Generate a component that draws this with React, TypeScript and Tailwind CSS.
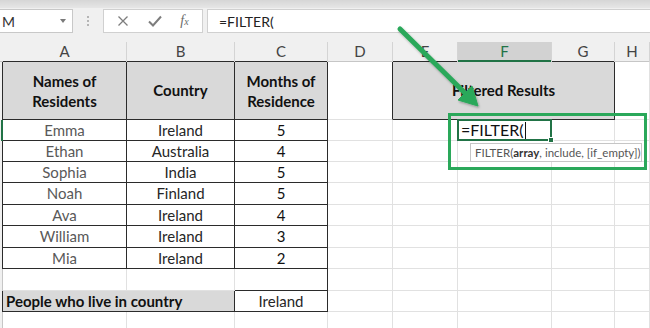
import React from "react";

const dark = "border-[#2b2b2b]";

type Row = { name: string; country: string; months: string };

const rows: Row[] = [
  { name: "Emma", country: "Ireland", months: "5" },
  { name: "Ethan", country: "Australia", months: "4" },
  { name: "Sophia", country: "India", months: "5" },
  { name: "Noah", country: "Finland", months: "5" },
  { name: "Ava", country: "Ireland", months: "4" },
  { name: "William", country: "Ireland", months: "3" },
  { name: "Mia", country: "Ireland", months: "2" },
];

const letters = ["A", "B", "C", "D", "E", "F", "G", "H"];

function Blank({ cls = "" }: { cls?: string }) {
  return <div className={`border-r border-b border-[#e1e1e1] ${cls}`} />;
}

export default function App() {
  return (
    <div className="relative w-[650px] h-[328px] overflow-hidden bg-white font-['Lato',sans-serif] text-[15px]">
      {/* formula bar */}
      <div className="h-[42px] bg-[#f0f0f0] flex flex-col">
        <div className="h-[8px] bg-gradient-to-b from-[#d6d6d6] to-[#e6e6e6]" />
        <div className="flex items-start pt-[1px] h-[34px]">
          <div className="w-[73px] h-[24px] bg-white border border-l-0 border-[#c8c8c8] flex items-center justify-between pl-[2px] pr-[6px]">
            <span className="text-[14px] text-[#333]">M</span>
            <span className="w-0 h-0 border-l-[3.5px] border-r-[3.5px] border-t-[4px] border-l-transparent border-r-transparent border-t-[#7a7a7a]" />
          </div>
          <div className="w-[30px] h-[24px] flex flex-col items-center justify-center gap-[2px]">
            <span className="w-[2px] h-[2px] bg-[#b5b5b5]" />
            <span className="w-[2px] h-[2px] bg-[#b5b5b5]" />
            <span className="w-[2px] h-[2px] bg-[#b5b5b5]" />
          </div>
          <div className="w-[100px] h-[24px] bg-white border border-[#d0d0d0] flex items-center justify-around px-[4px]">
            <svg width="12" height="12" viewBox="0 0 12 12">
              <path d="M1.5 1.5 L10.5 10.5 M10.5 1.5 L1.5 10.5" stroke="#7d7d7d" strokeWidth="1.3" />
            </svg>
            <svg width="14" height="12" viewBox="0 0 14 12">
              <path d="M1 6.5 L5 10.5 L13 1.5" stroke="#7d7d7d" strokeWidth="2" fill="none" />
            </svg>
            <span className="font-['Liberation_Serif',serif] italic text-[14px] text-[#6b6b6b] leading-none">
              f<span className="text-[10px]">x</span>
            </span>
          </div>
          <div className="ml-[4px] flex-1 h-[24px] bg-white border border-r-0 border-[#d0d0d0] flex items-center pl-[11px]">
            <span className="text-[14px] text-[#222]">=FILTER(</span>
          </div>
        </div>
      </div>

      {/* sheet */}
      <div className="grid grid-cols-[3px_124px_108px_93px_65px_65px_94px_63px_1fr] grid-rows-[20px_58px_21px_21px_21px_22px_21px_22px_21px_22px_21px_21px]">
        {/* column headers */}
        <div className="bg-[#f0f0f0] border-b border-[#c6c6c6]" />
        {letters.map((l, i) => {
          const active = l === "F";
          const darkBottom = i < 3 || (i >= 4 && i <= 6);
          return (
            <div
              key={l}
              className={`flex items-center justify-center border-r border-[#d4d4d4] ${
                active ? "bg-[#d2d2d2] text-[#217346]" : "bg-[#f0f0f0] text-[#444]"
              }`}
            >
              <div
                className={`w-full h-full flex items-center justify-center ${
                  active
                    ? "border-b-2 border-[#217346]"
                    : darkBottom
                    ? "border-b border-[#2b2b2b]"
                    : "border-b border-[#c6c6c6]"
                }`}
              >
                {l}
              </div>
            </div>
          );
        })}

        {/* table header row */}
        <div className={`bg-[#f0f0f0] border-r ${dark}`} />
        <div className={`bg-[#d9d9d9] border-r border-b ${dark} flex items-center justify-center text-center font-bold leading-[20px] text-[#111]`}>
          Names of
          <br />
          Residents
        </div>
        <div className={`bg-[#d9d9d9] border-r border-b ${dark} flex items-center justify-center font-bold text-[#111]`}>
          Country
        </div>
        <div className={`bg-[#d9d9d9] border-r border-b ${dark} flex items-center justify-center text-center font-bold leading-[20px] text-[#111]`}>
          Months of
          <br />
          Residence
        </div>
        <div className={`border-r border-b border-b-[#e1e1e1] ${dark}`} />
        <div className={`col-span-3 bg-[#d9d9d9] border-r border-b ${dark} flex items-center justify-center font-bold text-[#111]`}>
          Filtered Results
        </div>
        <Blank />

        {/* data rows */}
        {rows.map((r, i) => (
          <React.Fragment key={r.name}>
            <div
              className={`bg-[#f0f0f0] border-r ${i === 0 ? "border-r-2 border-[#217346]" : dark}`}
            />
            <div className={`border-r border-b ${dark} flex items-center justify-center text-[#595959]`}>
              {r.name}
            </div>
            <div className={`border-r border-b ${dark} flex items-center justify-center text-[#262626]`}>
              {r.country}
            </div>
            <div className={`border-r border-b ${dark} flex items-center justify-center text-[#111]`}>
              {r.months}
            </div>
            <Blank />
            <Blank />
            {i === 0 ? (
              <div className="relative border-r border-b border-[#e1e1e1]">
                <div className="absolute -inset-[1px] border-2 border-[#217346]" />
                <div className="absolute -right-[3px] -bottom-[3px] w-[6px] h-[6px] bg-[#217346] border border-white" />
                <div className="absolute left-[3px] top-0 h-full flex items-center whitespace-nowrap text-[16px] text-[#111]">
                  =FILTER(
                  <span className="ml-[1px] w-[1px] h-[17px] bg-[#111]" />
                </div>
              </div>
            ) : (
              <Blank />
            )}
            <Blank />
            <Blank />
          </React.Fragment>
        ))}

        {/* empty row */}
        <div className="bg-[#f0f0f0] border-r border-[#c6c6c6]" />
        <div className={`border-r border-[#e1e1e1] border-b ${dark} border-r-[#e1e1e1]`} />
        <div className={`border-r border-[#e1e1e1] border-b ${dark} border-r-[#e1e1e1]`} />
        <div className={`border-r border-b ${dark}`} />
        <Blank />
        <Blank />
        <Blank />
        <Blank />
        <Blank />

        {/* people row */}
        <div className={`bg-[#f0f0f0] border-r ${dark}`} />
        <div className={`col-span-2 bg-[#d9d9d9] border-r border-b ${dark} flex items-center pl-[3px] font-bold text-[#111]`}>
          People who live in country
        </div>
        <div className={`border-r border-b ${dark} flex items-center justify-center text-[#262626]`}>
          Ireland
        </div>
        <Blank />
        <Blank />
        <Blank />
        <Blank />
        <Blank />

        {/* last row */}
        <div className="bg-[#f0f0f0] border-r border-[#c6c6c6]" />
        <Blank />
        <Blank />
        <Blank />
        <Blank />
        <Blank />
        <Blank />
        <Blank />
        <Blank />
      </div>

      {/* function tooltip */}
      <div className="absolute left-[470px] top-[143px] w-[172px] h-[19px] bg-white border border-[#c6c6c6] flex items-center pl-[4px] text-[11.5px] text-[#555] whitespace-nowrap">
        FILTER(<span className="font-bold text-[#333]">array</span>, include, [if_empty])
      </div>

      {/* annotation box */}
      <div className="absolute left-[448px] top-[113px] w-[199px] h-[57px] border-[3px] border-[#2aa85a]" />

      {/* annotation arrow */}
      <svg className="absolute left-0 top-0 pointer-events-none" width="650" height="328">
        <defs>
          <filter id="sh" x="-20%" y="-20%" width="140%" height="140%">
            <feDropShadow dx="1" dy="1.5" stdDeviation="1.2" floodColor="#000" floodOpacity="0.3" />
          </filter>
        </defs>
        <g filter="url(#sh)" fill="#2aa85a" stroke="#2aa85a">
          <line x1="400" y1="29" x2="467" y2="95" strokeWidth="5" strokeLinecap="round" />
          <polygon points="478,106 458,100 472,86" strokeWidth="1" />
        </g>
      </svg>
    </div>
  );
}
